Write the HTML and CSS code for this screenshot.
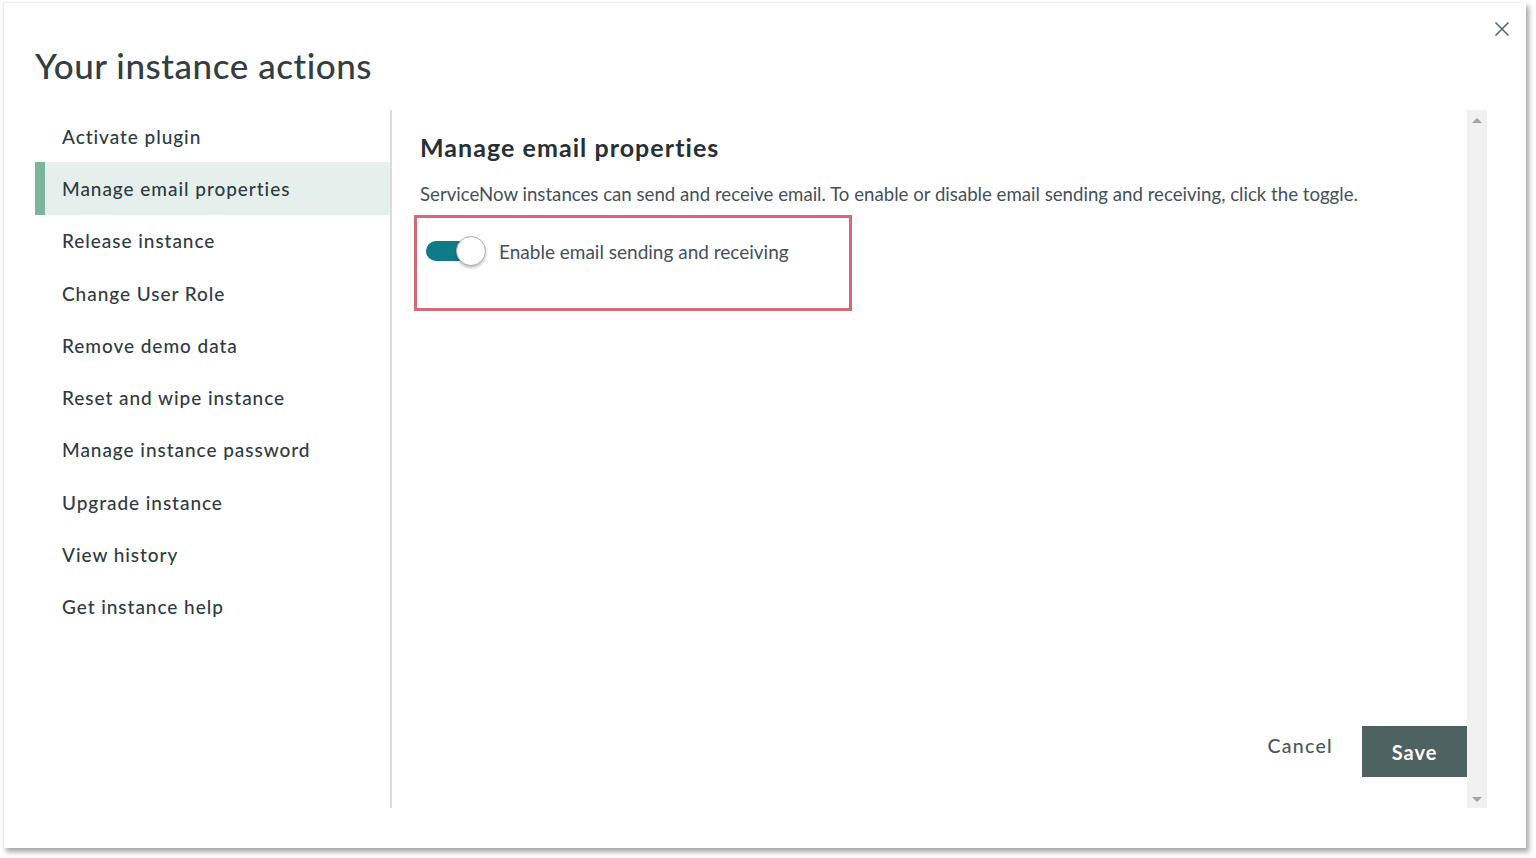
FILE: index.html
```html
<!DOCTYPE html>
<html lang="en">
<head>
    <meta charset="UTF-8">
    <title>Your instance actions</title>
    <link rel="stylesheet" href="styles.css">
</head>
<body>
    <div class="modal">
        <button class="close-btn" aria-label="Close">
            <svg width="16" height="16" viewBox="0 0 16 16"><path d="M1.5 1.5 L14.5 14.5 M14.5 1.5 L1.5 14.5" stroke="#5b6770" stroke-width="1.6" fill="none"/></svg>
        </button>
        <h1 class="modal-title">Your instance actions</h1>

        <div class="modal-body">
            <ul class="side-nav">
                <li>Activate plugin</li>
                <li class="active">Manage email properties</li>
                <li>Release instance</li>
                <li>Change User Role</li>
                <li>Remove demo data</li>
                <li>Reset and wipe instance</li>
                <li>Manage instance password</li>
                <li>Upgrade instance</li>
                <li>View history</li>
                <li>Get instance help</li>
            </ul>

            <div class="content">
                <h2 class="content-title">Manage email properties</h2>
                <p class="content-desc">ServiceNow instances can send and receive email. To enable or disable email sending and receiving, click the toggle.</p>

                <div class="highlight-box">
                    <label class="toggle-row">
                        <span class="toggle"><span class="toggle-knob"></span></span>
                        <span class="toggle-label">Enable email sending and receiving</span>
                    </label>
                </div>

                <div class="actions">
                    <button class="cancel-btn">Cancel</button>
                    <button class="save-btn">Save</button>
                </div>
            </div>

            <div class="scrollbar">
                <span class="arrow-up"></span>
                <span class="arrow-down"></span>
            </div>
        </div>
    </div>
</body>
</html>
```

FILE: styles.css
```css
:root {
    --text-dark: #2f3b42;
    --text-body: #44505a;
    --accent: #7db59c;
    --active-bg: #e5efeb;
    --toggle: #0e7b87;
    --save-bg: #4e6262;
    --red-box: #d5697a;
}

* {
    margin: 0;
    padding: 0;
    box-sizing: border-box;
}

body {
    background: #fff;
    font-family: Lato, "Liberation Sans", sans-serif;
    color: var(--text-dark);
    width: 1536px;
    height: 858px;
    overflow: hidden;
}

.modal {
    position: relative;
    width: 1523px;
    height: 846px;
    margin: 2px 0 0 3px;
    background: #fff;
    border-top: 1px solid #f2f2f2;
    border-left: 1px solid #f0f0f0;
    box-shadow: 3px 4px 5px rgba(0, 0, 0, 0.35);
    padding: 0 39px 40px 31px;
    display: flex;
    flex-direction: column;
}

.close-btn {
    position: absolute;
    top: 18px;
    right: 16px;
    background: none;
    border: none;
    cursor: pointer;
    display: flex;
}

.modal-title {
    font-size: 35px;
    font-weight: 500;
    color: #333d44;
    letter-spacing: 0.55px;
    height: 107px;
    padding-top: 42px;
    line-height: 40px;
}

.modal-body {
    flex: 1;
    display: flex;
}

.side-nav {
    list-style: none;
    width: 357px;
    border-right: 2px solid #dcdcdc;
    padding-top: 0;
}

.side-nav li {
    height: 52.3px;
    display: flex;
    align-items: center;
    padding-left: 27px;
    font-size: 19px;
    font-weight: 500;
    color: var(--text-dark);
    letter-spacing: 0.95px;
    cursor: pointer;
}

.side-nav li.active {
    background: var(--active-bg);
    border-left: 10px solid var(--accent);
    padding-left: 17px;
}

.content {
    flex: 1;
    display: flex;
    flex-direction: column;
    padding: 22px 0 31px 28px;
}

.content-title {
    font-size: 25px;
    font-weight: 700;
    color: #262f35;
    line-height: 30px;
    letter-spacing: 1.05px;
}

.content-desc {
    margin-top: 20px;
    font-size: 18.65px;
    color: var(--text-body);
    line-height: 24px;
}

.highlight-box {
    margin: 9px 0 0 -6px;
    width: 438px;
    height: 96px;
    border: 3px solid var(--red-box);
    padding: 18px 0 0 9px;
}

.toggle-row {
    display: flex;
    align-items: center;
    gap: 13px;
    cursor: pointer;
}

.toggle {
    position: relative;
    width: 60px;
    height: 30px;
    display: flex;
    align-items: center;
}

.toggle::before {
    content: '';
    width: 52px;
    height: 20px;
    border-radius: 10px;
    background: var(--toggle);
}

.toggle-knob {
    position: absolute;
    right: 0;
    top: 0;
    width: 30px;
    height: 30px;
    border-radius: 50%;
    background: #fff;
    border: 1.5px solid #a9b0b4;
    box-shadow: 0 2px 3px rgba(0, 0, 0, 0.25);
}

.toggle-label {
    font-size: 19px;
    color: var(--text-body);
}

.actions {
    margin-top: auto;
    display: flex;
    align-items: center;
    justify-content: flex-end;
    gap: 29px;
}

.cancel-btn {
    background: none;
    border: none;
    font-family: inherit;
    font-size: 19.5px;
    font-weight: 500;
    color: #4a565e;
    letter-spacing: 1.3px;
    margin-top: -12px;
    cursor: pointer;
}

.save-btn {
    width: 105px;
    height: 51px;
    background: var(--save-bg);
    border: none;
    color: #fff;
    font-family: inherit;
    font-size: 20px;
    font-weight: 700;
    letter-spacing: 1px;
    cursor: pointer;
}

.scrollbar {
    width: 20px;
    background: #f1f1f1;
    display: flex;
    flex-direction: column;
    justify-content: space-between;
    align-items: center;
    padding: 8px 0 6px;
}

.arrow-up {
    border-left: 5px solid transparent;
    border-right: 5px solid transparent;
    border-bottom: 5px solid #a3a3a3;
}

.arrow-down {
    border-left: 5px solid transparent;
    border-right: 5px solid transparent;
    border-top: 5px solid #a3a3a3;
}
```
